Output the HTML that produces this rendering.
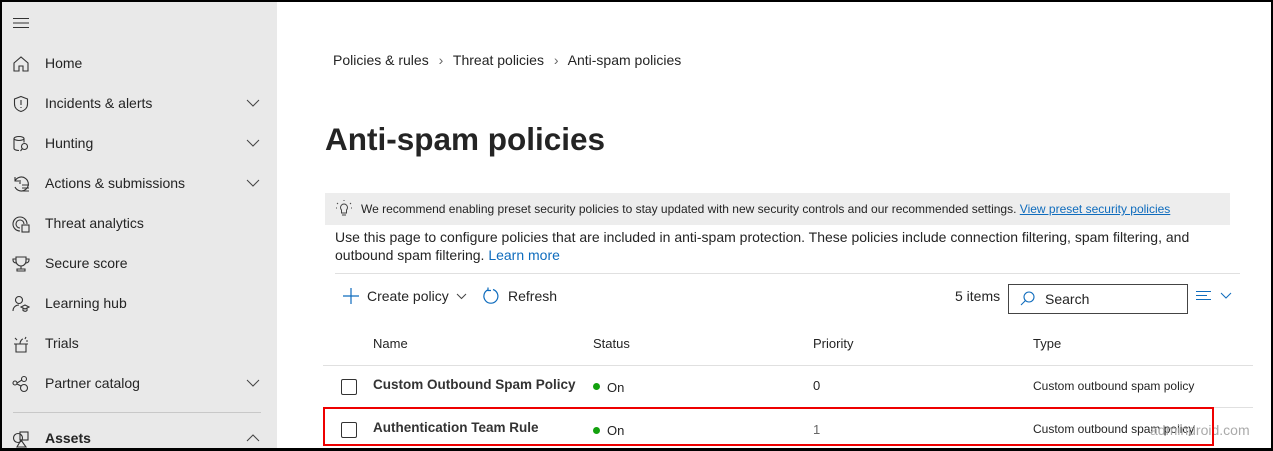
<!DOCTYPE html><html><head><style>
*{margin:0;padding:0;box-sizing:border-box}
body{width:1273px;height:451px;overflow:hidden;background:#fff;font-family:"Liberation Sans",sans-serif;color:#242424;position:relative}
.frame{position:absolute;left:0;top:0;width:1273px;height:451px;border:2px solid #000;border-bottom-width:3px;z-index:10;pointer-events:none}
.side{position:absolute;left:0;top:0;width:277px;height:451px;background:#e9e9e9}
.it{position:absolute;left:45px;font-size:14px;color:#242424}
.ic{position:absolute;left:12px;width:18px;height:18px}
.chev{position:absolute;left:246px;width:14px;height:8px}
.t{position:absolute;white-space:nowrap}
</style></head><body>
<div class="side">
<svg style="position:absolute;left:13px;top:17px" width="16" height="12"><path d="M0 1.5H16M0 6H16M0 10.5H16" stroke="#333" stroke-width="1"/></svg>
<svg class="ic" style="top:55px" viewBox="0 0 18 18" fill="none" stroke="#333" stroke-width="1.1"><path d="M2 8L9 2l7 6v8h-5v-5H7v5H2z"/></svg>
<div class="it" style="top:55px">Home</div>
<svg class="ic" style="top:95px" viewBox="0 0 18 18" fill="none" stroke="#333" stroke-width="1.1"><path d="M9 1.5l6.5 2.5v5c0 4-3 6.5-6.5 7.5C5.5 15.5 2.5 13 2.5 9V4z"/><path d="M9 5v5M9 12v1"/></svg>
<div class="it" style="top:95px">Incidents &amp; alerts</div>
<svg class="ic" style="top:135px" viewBox="0 0 18 18" fill="none" stroke="#333" stroke-width="1.1"><ellipse cx="7" cy="3.5" rx="5" ry="2"/><path d="M2 3.5v10c0 1 2 2 5 2M12 3.5v4"/><circle cx="12.5" cy="11.5" r="3"/><path d="M10.5 13.5l-2 2.5"/></svg>
<div class="it" style="top:135px">Hunting</div>
<svg class="ic" style="top:175px" viewBox="0 0 18 18" fill="none" stroke="#333" stroke-width="1.1"><path d="M3 6a7 7 0 1 1 0 6M3 2v4h4M8 5v4M10 10h7M10 13h7M10 16h7"/></svg>
<div class="it" style="top:175px">Actions &amp; submissions</div>
<svg class="ic" style="top:215px" viewBox="0 0 18 18" fill="none" stroke="#333" stroke-width="1.1"><path d="M8 16A7 7 0 1 1 15 9M8 13a4 4 0 1 1 4-4"/><rect x="10" y="10" width="7" height="7"/></svg>
<div class="it" style="top:215px">Threat analytics</div>
<svg class="ic" style="top:255px" viewBox="0 0 18 18" fill="none" stroke="#333" stroke-width="1.1"><path d="M4 2h10v4a5 5 0 0 1-10 0zM4 4H1v1a3 3 0 0 0 3 3M14 4h3v1a3 3 0 0 1-3 3M9 11v3M5 16h8v-2H5z"/></svg>
<div class="it" style="top:255px">Secure score</div>
<svg class="ic" style="top:295px" viewBox="0 0 18 18" fill="none" stroke="#333" stroke-width="1.1"><circle cx="7" cy="5" r="3.5"/><path d="M1 16c0-4 3-6 6-6M9 12l4-2 4 2-4 2zM11 13v2.5c1.5 1 3 1 4 0V13"/></svg>
<div class="it" style="top:295px">Learning hub</div>
<svg class="ic" style="top:335px" viewBox="0 0 18 18" fill="none" stroke="#333" stroke-width="1.1"><path d="M2 9h14M4 9v8h10V9M8 9c0-3 2-5 3-5M3 3l2 2M14 2l-1 2M16 6h-2"/></svg>
<div class="it" style="top:335px">Trials</div>
<svg class="ic" style="top:375px" viewBox="0 0 18 18" fill="none" stroke="#333" stroke-width="1.1"><circle cx="3" cy="8" r="2"/><circle cx="12" cy="4" r="2.5"/><circle cx="12" cy="13" r="3.5"/><path d="M5 8l5-3M5 9l4 2"/></svg>
<div class="it" style="top:375px">Partner catalog</div>
<div style="position:absolute;left:13px;top:412px;width:248px;height:1px;background:#c8c8c8"></div>
<svg class="ic" style="top:430px" viewBox="0 0 18 18" fill="none" stroke="#333" stroke-width="1.1"><circle cx="6" cy="8" r="4.5"/><rect x="8" y="2" width="8" height="8"/><path d="M9 10l-4 7h9z"/></svg>
<div class="it" style="top:430px;font-weight:bold">Assets</div>
<svg class="chev" style="top:99px" viewBox="0 0 14 8" fill="none" stroke="#444"><path d="M1 1l6 6 6-6"/></svg>
<svg class="chev" style="top:139px" viewBox="0 0 14 8" fill="none" stroke="#444"><path d="M1 1l6 6 6-6"/></svg>
<svg class="chev" style="top:179px" viewBox="0 0 14 8" fill="none" stroke="#444"><path d="M1 1l6 6 6-6"/></svg>
<svg class="chev" style="top:379px" viewBox="0 0 14 8" fill="none" stroke="#444"><path d="M1 1l6 6 6-6"/></svg>
<svg class="chev" style="top:434px" viewBox="0 0 14 8" fill="none" stroke="#444"><path d="M1 7l6-6 6 6"/></svg>
</div>

<div class="t" style="left:333px;top:52px;font-size:14px">Policies &amp; rules <span style="color:#666;margin:0 6px">&#8250;</span> Threat policies <span style="color:#666;margin:0 6px">&#8250;</span> Anti-spam policies</div>
<div class="t" style="left:325px;top:121px;font-size:31.5px;font-weight:bold">Anti-spam policies</div>
<div style="position:absolute;left:325px;top:193px;width:905px;height:32px;background:#ededed"></div>
<svg style="position:absolute;left:336px;top:200px" width="16" height="16" viewBox="0 0 16 16" fill="none" stroke="#444"><path d="M5.5 10a3.5 3.5 0 1 1 5 0v3h-5zM6 15h4M8 1V0M2 4l-1-1M14 4l1-1M1 8H0M15 8h1"/></svg>
<div class="t" style="left:361px;top:202px;font-size:12px">We recommend enabling preset security policies to stay updated with new security controls and our recommended settings. <span style="color:#0f6cbd;text-decoration:underline">View preset security policies</span></div>
<div class="t" style="left:335px;top:228px;font-size:14px;line-height:18px">Use this page to configure policies that are included in anti-spam protection. These policies include connection filtering, spam filtering, and<br>outbound spam filtering. <span style="color:#0f6cbd">Learn more</span></div>
<div style="position:absolute;left:335px;top:273px;width:905px;height:1px;background:#e0e0e0"></div>
<svg style="position:absolute;left:343px;top:288px" width="16" height="16"><path d="M8 0v16M0 8h16" stroke="#0f6cbd" stroke-width="1.2"/></svg>
<div class="t" style="left:367px;top:288px;font-size:14px">Create policy</div>
<svg style="position:absolute;left:456px;top:293px" width="11" height="7" fill="none" stroke="#444"><path d="M1 1l4.5 4.5L10 1"/></svg>
<svg style="position:absolute;left:482px;top:287px" width="18" height="18" viewBox="0 0 18 18" fill="none" stroke="#0f6cbd" stroke-width="1.2"><path d="M11 2.5A7 7 0 1 1 6 2.8M6 0.5v3h3"/></svg>
<div class="t" style="left:508px;top:288px;font-size:14px">Refresh</div>
<div class="t" style="left:955px;top:288px;font-size:14px">5 items</div>
<div style="position:absolute;left:1008px;top:284px;width:180px;height:30px;border:1px solid #444"></div>
<svg style="position:absolute;left:1020px;top:291px" width="15" height="15" fill="none" stroke="#0f6cbd" stroke-width="1.1"><circle cx="9" cy="6" r="5"/><path d="M5.5 9.5L1 14"/></svg>
<div class="t" style="left:1045px;top:291px;font-size:14px">Search</div>
<svg style="position:absolute;left:1196px;top:290px" width="36" height="12" fill="none" stroke="#0f6cbd"><path d="M0 1.5h15M0 5.5h11M0 9.5h15M25 3l5 5 5-5"/></svg>
<div class="t" style="left:373px;top:336px;font-size:13px">Name</div>
<div class="t" style="left:593px;top:336px;font-size:13px">Status</div>
<div class="t" style="left:813px;top:336px;font-size:13px">Priority</div>
<div class="t" style="left:1033px;top:336px;font-size:13px">Type</div>
<div style="position:absolute;left:323px;top:365px;width:930px;height:1px;background:#e0e0e0"></div>
<div style="position:absolute;left:341px;top:379px;width:16px;height:16px;border:1px solid #333;border-radius:2px"></div>
<div class="t" style="left:373px;top:377px;font-size:13.5px;font-weight:bold;color:#333">Custom Outbound Spam Policy</div>
<div style="position:absolute;left:593px;top:383px;width:7px;height:7px;border-radius:50%;background:#13a10e"></div>
<div class="t" style="left:607px;top:380px;font-size:13px">On</div>
<div class="t" style="left:813px;top:378px;font-size:13px">0</div>
<div class="t" style="left:1033px;top:379px;font-size:12px">Custom outbound spam policy</div>
<div style="position:absolute;left:323px;top:407px;width:930px;height:1px;background:#e0e0e0"></div>
<div style="position:absolute;left:341px;top:422px;width:16px;height:16px;border:1px solid #333;border-radius:2px"></div>
<div class="t" style="left:373px;top:420px;font-size:13.5px;font-weight:bold;color:#333">Authentication Team Rule</div>
<div style="position:absolute;left:593px;top:427px;width:7px;height:7px;border-radius:50%;background:#13a10e"></div>
<div class="t" style="left:607px;top:423px;font-size:13px">On</div>
<div class="t" style="left:813px;top:422px;font-size:13px;color:#666">1</div>
<div class="t" style="left:1033px;top:422px;font-size:12px">Custom outbound spam policy</div>
<div class="t" style="left:1150px;top:422px;font-size:14px;color:#aaa">admindroid.com</div>
<div style="position:absolute;left:323px;top:407px;width:891px;height:39px;border:2px solid #e00"></div>
<div class="frame"></div>
</body></html>
